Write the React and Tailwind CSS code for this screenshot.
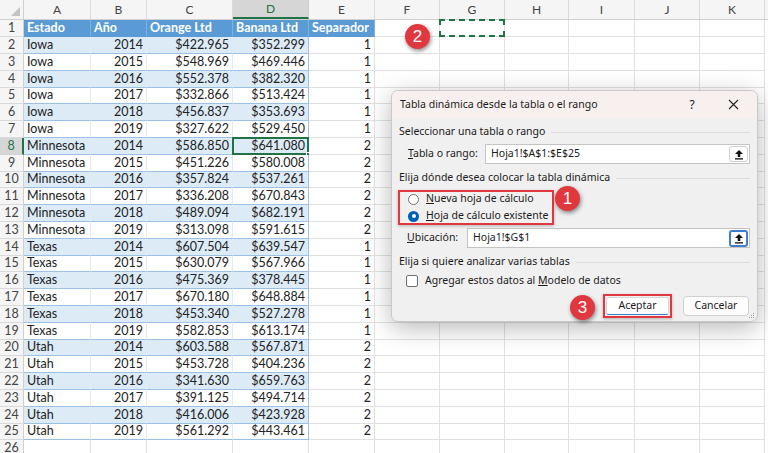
import React from "react";

const COLS = [
  { key: "A", w: "w-[67px]" },
  { key: "B", w: "w-[56px]" },
  { key: "C", w: "w-[86px]" },
  { key: "D", w: "w-[76px]" },
  { key: "E", w: "w-[66px]" },
  { key: "F", w: "w-[65px]" },
  { key: "G", w: "w-[65px]" },
  { key: "H", w: "w-[64px]" },
  { key: "I", w: "w-[66px]" },
  { key: "J", w: "w-[65px]" },
  { key: "K", w: "w-[65px]" },
];

const DATA = [
  ["Iowa", 2014, "$422.965", "$352.299", 1],
  ["Iowa", 2015, "$548.969", "$469.446", 1],
  ["Iowa", 2016, "$552.378", "$382.320", 1],
  ["Iowa", 2017, "$332.866", "$513.424", 1],
  ["Iowa", 2018, "$456.837", "$353.693", 1],
  ["Iowa", 2019, "$327.622", "$529.450", 1],
  ["Minnesota", 2014, "$586.850", "$641.080", 2],
  ["Minnesota", 2015, "$451.226", "$580.008", 2],
  ["Minnesota", 2016, "$357.824", "$537.261", 2],
  ["Minnesota", 2017, "$336.208", "$670.843", 2],
  ["Minnesota", 2018, "$489.094", "$682.191", 2],
  ["Minnesota", 2019, "$313.098", "$591.615", 2],
  ["Texas", 2014, "$607.504", "$639.547", 1],
  ["Texas", 2015, "$630.079", "$567.966", 1],
  ["Texas", 2016, "$475.369", "$378.445", 1],
  ["Texas", 2017, "$670.180", "$648.884", 1],
  ["Texas", 2018, "$453.340", "$527.278", 1],
  ["Texas", 2019, "$582.853", "$613.174", 1],
  ["Utah", 2014, "$603.588", "$567.871", 2],
  ["Utah", 2015, "$453.728", "$404.236", 2],
  ["Utah", 2016, "$341.630", "$659.763", 2],
  ["Utah", 2017, "$391.125", "$494.714", 2],
  ["Utah", 2018, "$416.006", "$423.928", 2],
  ["Utah", 2019, "$561.292", "$443.461", 2],
];

const HEADERS = ["Estado", "Año", "Orange Ltd", "Banana Ltd", "Separador"];

// Small up-arrow used by the range picker buttons
const PickIcon = () => (
  <svg width="10" height="11" viewBox="0 0 10 11">
    <path d="M5 1 L9 5 H6.3 V8 H3.7 V5 H1 Z" fill="#111" />
    <rect x="1" y="9.2" width="8" height="1.3" fill="#111" />
  </svg>
);

const Badge = ({ n, className }) => (
  <div
    className={`absolute w-[25px] h-[25px] rounded-full bg-[#e0383e] text-white flex items-center justify-center text-[17px] font-['Liberation_Sans',sans-serif] shadow-[1px_2px_4px_rgba(0,0,0,0.45)] ${className}`}
  >
    {n}
  </div>
);

const Cell = ({ col, row, value }) => {
  const i = COLS.findIndex((c) => c.key === col.key);
  const inTable = i < 4 && row >= 2 && row <= 25;
  const band = inTable && row % 2 === 0;
  const header = row === 1 && i < 5;
  const right = typeof value === "number" || (typeof value === "string" && value.startsWith("$"));

  let cls = "border-r border-b border-[#e1e1e1] bg-white";
  if (header) cls = "bg-[#5b9bd5] text-white font-bold border-r border-[#7fb0de] border-b border-b-[#5b9bd5]";
  else if (inTable)
    cls = `${band ? "bg-[#ddebf7]" : "bg-white"} border-b border-[#9bc2e6] ${
      i === 3 ? "border-r border-r-[#9bc2e6]" : "border-r border-r-[#e3e9f0]"
    }`;

  return (
    <div
      className={`${col.w} shrink-0 h-full relative flex items-center px-[3px] ${
        right ? "justify-end" : "justify-start"
      } ${cls}`}
    >
      <span className="leading-none whitespace-nowrap">{value}</span>
      {col.key === "D" && row === 8 && (
        <span className="absolute -left-px -top-px -right-px -bottom-px border-2 border-[#217346]">
          <span className="absolute -right-[4px] -bottom-[4px] w-[5px] h-[5px] bg-[#217346] border border-white" />
        </span>
      )}
      {col.key === "G" && row === 1 && (
        <span className="absolute -left-px -top-px -right-px -bottom-px border-2 border-dashed border-[#217346]" />
      )}
    </div>
  );
};

const Sheet = () => {
  const rows = Array.from({ length: 26 }, (_, k) => k + 1);
  return (
    <div className="w-[768px] h-[453px] overflow-hidden bg-white font-['Lato','Liberation_Sans',sans-serif] text-[12.5px] text-[#222]">
      {/* Column letters */}
      <div className="flex h-[20px] bg-[#f5f5f5] border-b border-[#d0d0d0]">
        <div className="w-[24px] shrink-0 relative border-r border-[#d0d0d0]">
          <svg className="absolute right-[3px] bottom-[3px]" width="9" height="9" viewBox="0 0 9 9">
            <path d="M9 0 V9 H0 Z" fill="#c3c3c3" />
          </svg>
        </div>
        {COLS.map((c) =>
          c.key === "D" ? (
            <div
              key={c.key}
              className={`${c.w} shrink-0 flex items-center justify-center bg-[#d6d6d6] text-[#217346] border-r border-[#d0d0d0] border-b-2 border-b-[#217346] text-[12px]`}
            >
              {c.key}
            </div>
          ) : (
            <div
              key={c.key}
              className={`${c.w} shrink-0 flex items-center justify-center text-[#444] border-r border-[#dadada] text-[12px]`}
            >
              {c.key}
            </div>
          )
        )}
      </div>

      {rows.map((r) => {
        const d = r >= 2 && r <= 25 ? DATA[r - 2] : null;
        const vals = r === 1 ? HEADERS : d ? d : [];
        return (
          <div key={r} className={`flex ${r % 5 === 0 ? "h-[16px]" : "h-[17px]"}`}>
            {r === 8 ? (
              <div className="w-[24px] shrink-0 flex items-center justify-center bg-[#d6d6d6] text-[#217346] border-b border-[#d0d0d0] border-r-2 border-r-[#217346] text-[12.5px]">
                {r}
              </div>
            ) : (
              <div className="w-[24px] shrink-0 flex items-center justify-center bg-[#f5f5f5] text-[#444] border-b border-[#dadada] border-r border-r-[#d0d0d0] text-[12.5px]">
                {r}
              </div>
            )}
            {COLS.map((c, i) => (
              <Cell key={c.key} col={c} row={r} value={vals[i]} />
            ))}
          </div>
        );
      })}
    </div>
  );
};

const SectionTitle = ({ children }) => (
  <div className="flex items-center h-[14px] gap-[6px]">
    <span className="whitespace-nowrap">{children}</span>
    <span className="flex-1 h-px bg-[#dcdcdc]" />
  </div>
);

const Dialog = () => (
  <div className="absolute left-[391px] top-[90px] w-[367px] h-[232px] rounded-[7px] border border-[#c9c9c9] bg-[#f0f0f0] overflow-hidden shadow-[0_6px_24px_rgba(0,0,0,0.28)] font-['Segoe_UI','Noto_Sans',sans-serif] text-[10.5px] text-[#1b1b1b]">
    {/* Title bar */}
    <div className="h-[27px] bg-[#f8f0ef] flex items-center pl-[8px] pr-[13px]">
      <span className="flex-1 text-[10.5px]">Tabla dinámica desde la tabla o el rango</span>
      <span className="w-[20px] text-center text-[12px]">?</span>
      <span className="w-[22px] ml-[20px] flex justify-center">
        <svg width="11" height="11" viewBox="0 0 11 11">
          <path d="M1 1 L10 10 M10 1 L1 10" stroke="#222" strokeWidth="1.1" />
        </svg>
      </span>
    </div>

    <div className="px-[7px] flex flex-col">
      <div className="mt-[7px]">
        <SectionTitle>Seleccionar una tabla o rango</SectionTitle>
      </div>

      <div className="mt-[5px] h-[20px] flex items-center">
        <span className="w-[86px] pl-[9px]">
          <u>T</u>abla o rango:
        </span>
        <div className="flex-1 h-[20px] bg-white border border-[#c4c4c4] flex items-center pl-[5px] pr-[1px]">
          <span className="flex-1">Hoja1!$A$1:$E$25</span>
          <span className="w-[19px] h-[16px] rounded-[3px] border border-[#d0d0d0] bg-white flex items-center justify-center">
            <PickIcon />
          </span>
        </div>
      </div>

      <div className="mt-[7px]">
        <SectionTitle>Elija dónde desea colocar la tabla dinámica</SectionTitle>
      </div>

      <div className="mt-[5px] w-[156px] h-[35px] -ml-px border-2 border-[#e0383e] flex flex-col justify-center gap-[3px] pl-[8px] shadow-[0_1px_3px_rgba(0,0,0,0.25)]">
        <div className="flex items-center gap-[7px] h-[14px]">
          <span className="w-[11px] h-[11px] rounded-full border border-[#707070] bg-white" />
          <span>
            <u>N</u>ueva hoja de cálculo
          </span>
        </div>
        <div className="flex items-center gap-[7px] h-[14px]">
          <span className="w-[11px] h-[11px] rounded-full bg-[#005fb8] flex items-center justify-center">
            <span className="w-[4px] h-[4px] rounded-full bg-white" />
          </span>
          <span>
            <u>H</u>oja de cálculo existente
          </span>
        </div>
      </div>

      <div className="mt-[3px] h-[20px] flex items-center">
        <span className="w-[68px] pl-[8px]">
          <u>U</u>bicación:
        </span>
        <div className="flex-1 h-[20px] bg-white border border-[#c4c4c4] flex items-center pl-[5px] pr-[1px]">
          <span className="flex-1">Hoja1!$G$1</span>
          <span className="w-[19px] h-[17px] rounded-[3px] border-2 border-[#3b7fd0] bg-white flex items-center justify-center">
            <PickIcon />
          </span>
        </div>
      </div>

      <div className="mt-[7px]">
        <SectionTitle>Elija si quiere analizar varias tablas</SectionTitle>
      </div>

      <div className="mt-[5px] h-[14px] flex items-center gap-[7px] pl-[7px]">
        <span className="w-[12px] h-[12px] rounded-[2px] border border-[#707070] bg-white" />
        <span>
          Agregar estos datos al <u>M</u>odelo de datos
        </span>
      </div>

      <div className="mt-[6px] h-[24px] flex items-center justify-end gap-[11px] pr-[1px]">
        <div className="w-[69px] h-[24px] border-2 border-[#e0383e] p-[1px] shadow-[0_1px_3px_rgba(0,0,0,0.25)]">
          <div className="h-full rounded-[3px] bg-white border border-[#d6d6d6] border-b-[#3b7fd0] flex items-center justify-center">
            Aceptar
          </div>
        </div>
        <div className="w-[66px] h-[20px] rounded-[4px] bg-[#fdfdfd] border border-[#d0d0d0] flex items-center justify-center">
          Cancelar
        </div>
      </div>
    </div>

    <svg className="absolute right-[2px] bottom-[2px]" width="7" height="7" viewBox="0 0 7 7">
      <g fill="#9a9a9a">
        <rect x="5" y="1" width="1" height="1" />
        <rect x="3" y="3" width="1" height="1" />
        <rect x="5" y="3" width="1" height="1" />
        <rect x="1" y="5" width="1" height="1" />
        <rect x="3" y="5" width="1" height="1" />
        <rect x="5" y="5" width="1" height="1" />
      </g>
    </svg>
  </div>
);

const App = () => {
  return (
    <div className="relative w-[768px] h-[453px] overflow-hidden">
      <Sheet />
      <Dialog />
      <Badge n="2" className="left-[405px] top-[24px]" />
      <Badge n="1" className="left-[555px] top-[186px]" />
      <Badge n="3" className="left-[570px] top-[295px]" />
    </div>
  );
};

export default App;
